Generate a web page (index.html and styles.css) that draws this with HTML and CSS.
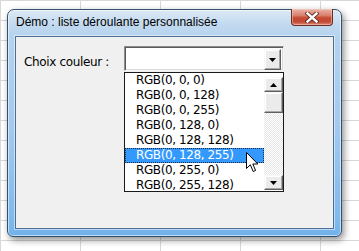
FILE: index.html
```html
<!DOCTYPE html>
<html lang="fr">
<head>
<meta charset="utf-8">
<title>Démo : liste déroulante personnalisée</title>
<link rel="stylesheet" href="styles.css">
</head>
<body>
<div class="screen">
  <div class="window">
    <div class="titlebar">
      <span class="title">Démo : liste déroulante personnalisée</span>
      <div class="close">
        <svg width="14" height="11" viewBox="0 0 14 11">
          <path d="M2.5 1.5 L11.5 9.5 M11.5 1.5 L2.5 9.5" stroke="#5a2a20" stroke-width="4.2" stroke-linecap="square" fill="none"/>
          <path d="M2.5 1.5 L11.5 9.5 M11.5 1.5 L2.5 9.5" stroke="#ffffff" stroke-width="2.4" stroke-linecap="square" fill="none"/>
        </svg>
      </div>
    </div>
    <div class="client">
      <div class="row">
        <span class="label">Choix couleur :</span>
        <div class="combo-wrap">
          <div class="combo">
            <div class="combo-text"></div>
            <div class="btn drop-btn">
              <svg width="7" height="4" viewBox="0 0 7 4"><path d="M0 0 H7 L3.5 4 Z" fill="#000"/></svg>
            </div>
          </div>
          <div class="list">
            <ul class="items">
              <li class="item">RGB(0, 0, 0)</li>
              <li class="item">RGB(0, 0, 128)</li>
              <li class="item">RGB(0, 0, 255)</li>
              <li class="item">RGB(0, 128, 0)</li>
              <li class="item">RGB(0, 128, 128)</li>
              <li class="item selected">RGB(0, 128, 255)</li>
              <li class="item">RGB(0, 255, 0)</li>
              <li class="item">RGB(0, 255, 128)</li>
            </ul>
            <div class="scrollbar">
              <div class="btn sb-btn">
                <svg width="7" height="4" viewBox="0 0 7 4"><path d="M0 4 H7 L3.5 0 Z" fill="#000"/></svg>
              </div>
              <div class="btn thumb"></div>
              <div class="track"></div>
              <div class="btn sb-btn">
                <svg width="7" height="4" viewBox="0 0 7 4"><path d="M0 0 H7 L3.5 4 Z" fill="#000"/></svg>
              </div>
            </div>
          </div>
        </div>
      </div>
    </div>
  </div>
  <svg class="cursor" width="13" height="21" viewBox="0 0 13 21">
    <path d="M0.5 0.5 L0.5 16.5 L4.3 12.8 L7.2 19.5 L9.6 18.5 L6.8 12 L11.8 12 Z" fill="#fff" stroke="#000" stroke-width="1" stroke-linejoin="miter"/>
  </svg>
</div>
</body>
</html>
```

FILE: styles.css
```css
html, body {
  margin: 0;
  padding: 0;
}

body {
  width: 359px;
  height: 251px;
  overflow: hidden;
  background: #ffffff;
}

.screen {
  position: relative;
  width: 359px;
  height: 251px;
  box-sizing: border-box;
  padding: 9px 0 0 7px;
  background-color: #ffffff;
  background-image:
    linear-gradient(to right, #d8d8d8 1px, transparent 1px),
    linear-gradient(to bottom, #d8d8d8 1px, transparent 1px);
  background-size: 80px 100%, 100% 20px;
}

.window {
  width: 335px;
  height: 228px;
  box-sizing: border-box;
  border: 1px solid #34506e;
  border-radius: 7px 7px 6px 6px;
  background: linear-gradient(to bottom, #dce9f5 0px, #c3daf0 14px, #b4d2ee 27px, #a2c9ee 120px, #7db8ec 215px, #6eaeea 228px);
  box-shadow: 2px 3px 7px rgba(0, 0, 0, 0.45), inset 0 0 0 1px rgba(255, 255, 255, 0.55);
  padding: 0 7px 7px 7px;
  display: flex;
  flex-direction: column;
}

.titlebar {
  height: 26px;
  display: flex;
  align-items: flex-start;
}

.title {
  font-family: "Liberation Sans", Arial, sans-serif;
  font-size: 12px;
  line-height: 14px;
  color: #000;
  margin-top: 5px;
  padding-left: 1px;
  white-space: nowrap;
}

.close {
  margin-left: auto;
  margin-right: 1px;
  margin-top: -1px;
  width: 42px;
  height: 17px;
  box-sizing: border-box;
  border: 1px solid #6a2e24;
  border-top: none;
  border-radius: 0 0 4px 4px;
  background: linear-gradient(to bottom, #eab3a6 0%, #d8806e 40%, #c54a33 55%, #c24a34 80%, #dc8b78 100%);
  box-shadow: inset 0 0 0 1px rgba(255, 220, 210, 0.45);
  display: flex;
  align-items: center;
  justify-content: center;
}

.client {
  flex: 1;
  background: #f0f0f0;
  border: 1px solid #4d6f94;
  box-shadow: 0 0 0 1px rgba(255, 255, 255, 0.5);
  padding: 9px 0 0 8px;
}

.row {
  display: flex;
  align-items: flex-start;
}

.label {
  width: 100px;
  margin-top: 9px;
  font-family: "DejaVu Sans", Verdana, sans-serif;
  font-size: 12px;
  letter-spacing: -0.35px;
  line-height: 15px;
  color: #000;
  white-space: nowrap;
}

.combo-wrap {
  width: 160px;
  display: flex;
  flex-direction: column;
}

.combo {
  height: 25px;
  box-sizing: border-box;
  background: #fff;
  border-top: 1px solid #8c8c8c;
  border-left: 1px solid #8c8c8c;
  border-right: 1px solid #f4f4f4;
  border-bottom: 1px solid #f4f4f4;
  box-shadow: inset 1px 1px 0 #5a5a5a, inset -1px -1px 0 #dcdcdc;
  display: flex;
  justify-content: flex-end;
  padding: 2px 2px 2px 0;
}

.combo-text {
  flex: 1;
}

.btn {
  box-sizing: border-box;
  background: #ebebeb;
  border-top: 1px solid #f8f8f8;
  border-left: 1px solid #f8f8f8;
  border-right: 1px solid #5e5e5e;
  border-bottom: 1px solid #5e5e5e;
  box-shadow: inset -1px -1px 0 #a8a8a8, inset 1px 1px 0 #ffffff;
  display: flex;
  align-items: center;
  justify-content: center;
}

.drop-btn {
  width: 17px;
  height: 21px;
}

.list {
  margin-top: 1px;
  height: 120px;
  box-sizing: border-box;
  border: 1px solid #1a1a1a;
  background: #fff;
  display: flex;
  overflow: hidden;
}

.items {
  list-style: none;
  margin: 0;
  padding: 0;
  flex: 1;
}

.item {
  height: 15px;
  box-sizing: border-box;
  padding-left: 11px;
  font-family: "DejaVu Sans", Verdana, sans-serif;
  font-size: 12px;
  letter-spacing: -0.4px;
  line-height: 15px;
  color: #000;
  white-space: nowrap;
}

.item.selected {
  background: #3399ff;
  color: #ffffff;
  outline: 1px dotted #1c2a40;
  outline-offset: -1px;
}

.scrollbar {
  width: 19px;
  display: flex;
  flex-direction: column;
  margin-top: 4px;
  margin-bottom: 1px;
}

.sb-btn {
  height: 15px;
}

.thumb {
  height: 21px;
}

.track {
  flex: 1;
  background-color: #f6f6f6;
  background-image: repeating-conic-gradient(#ffffff 0 25%, #e6e6e6 0 50%);
  background-size: 2px 2px;
}

.cursor {
  position: absolute;
  left: 246px;
  top: 152px;
}
```
